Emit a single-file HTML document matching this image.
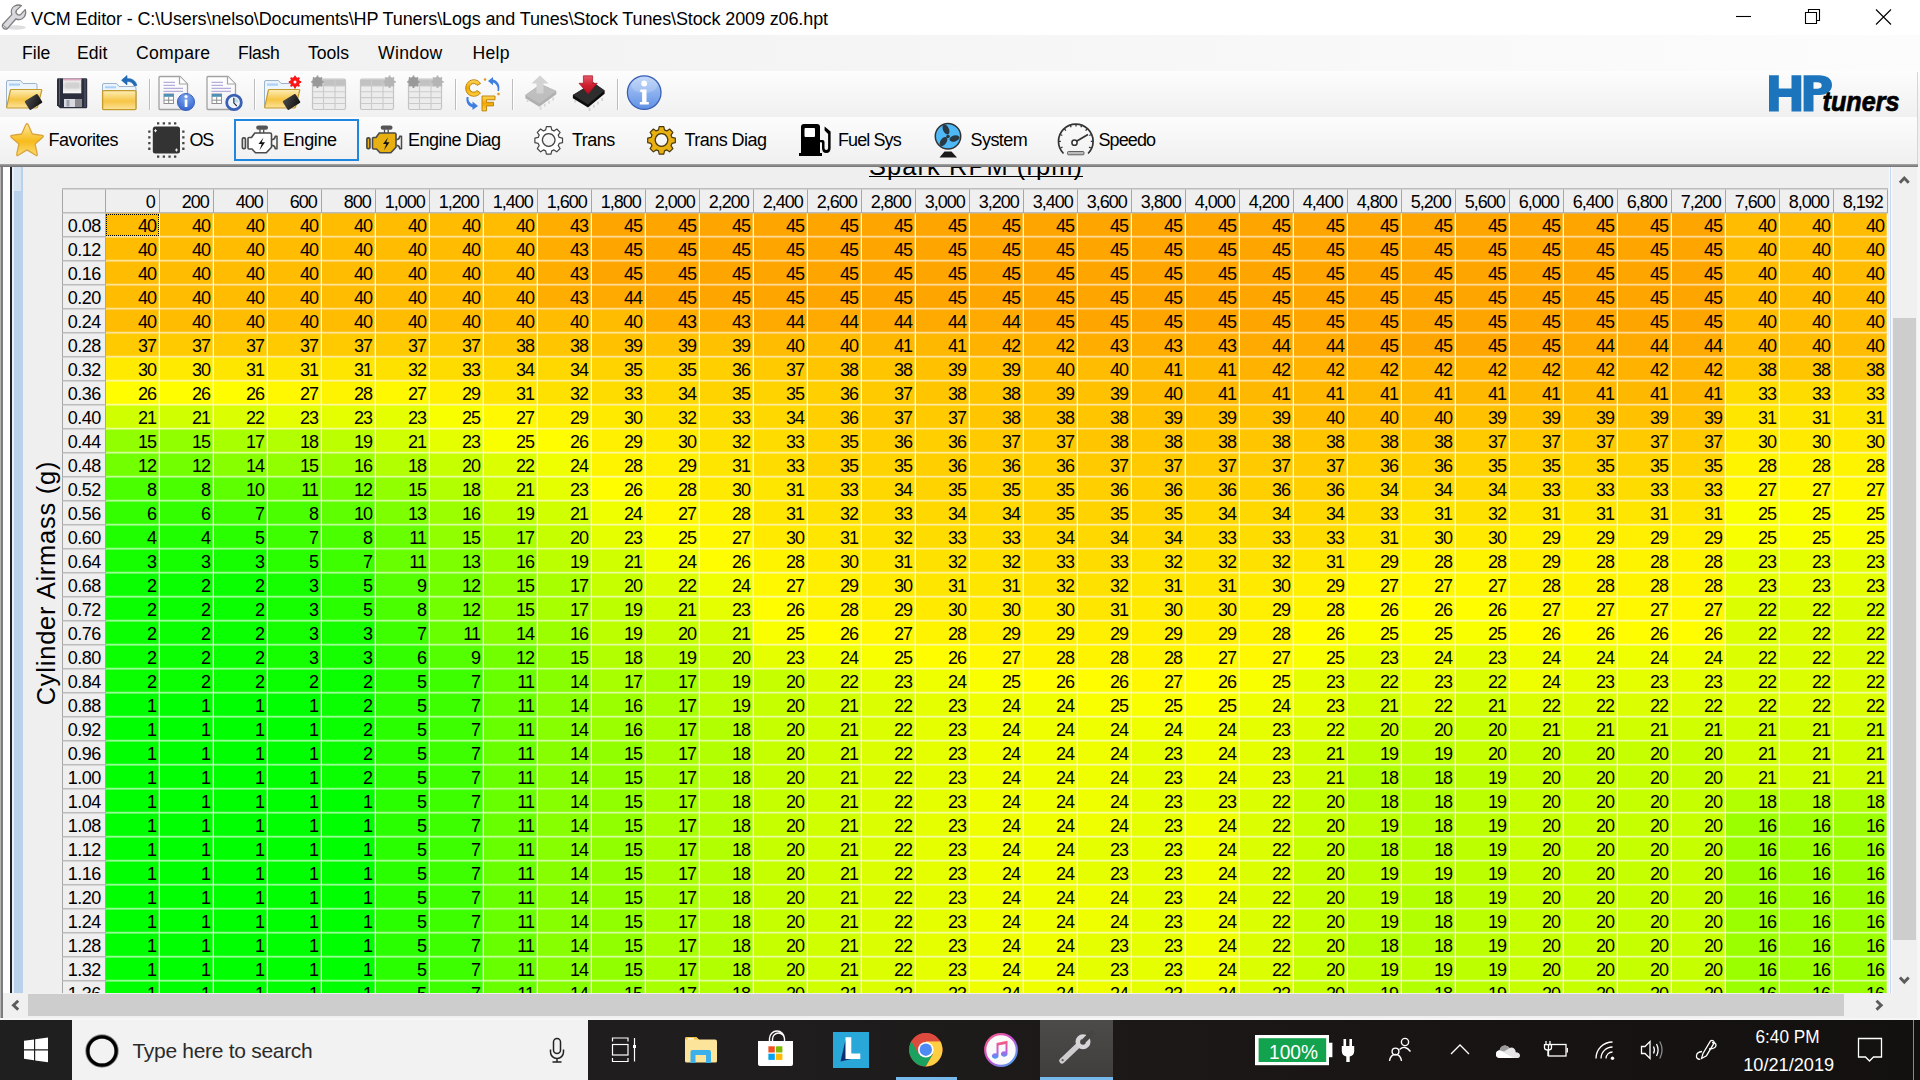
<!DOCTYPE html>
<html><head><meta charset="utf-8"><title>VCM Editor</title>
<style>
*{box-sizing:border-box}
html,body{margin:0;padding:0}
body{width:1920px;height:1080px;overflow:hidden;background:#f0f0f0;font-family:"Liberation Sans",sans-serif;position:relative;color:#000}
.abs{position:absolute}
#titlebar{position:absolute;left:0;top:0;width:1920px;height:35px;background:#fff}
#menubar{position:absolute;left:0;top:35px;width:1920px;height:36px;background:linear-gradient(to right,#efefef,#fcfcfc)}
#toolbar{position:absolute;left:0;top:71px;width:1920px;height:46px;background:linear-gradient(#fdfdfd,#f0f0f0)}
#tabs{position:absolute;left:0;top:117px;width:1918px;height:47px;background:linear-gradient(#fcfcfc,#f0f0f0)}
#tabline{position:absolute;left:0;top:164px;width:1918px;height:3px;background:linear-gradient(#a8a8a8,#8a8a8a 50%,#727272);z-index:5}
#content{position:absolute;left:0;top:166px;width:1920px;height:854px;background:#efefef;overflow:hidden}
#view{position:absolute;left:23px;top:0;width:1866px;height:827px;overflow:hidden;background:#efefef}
#grid{position:absolute;left:39px;top:22px;width:1826px;transform:translateY(.5px)}
.hr,.tr{display:flex;height:24px}
.hr{height:25px;border-top:1px solid #8a8a8a}
.hc{width:54px;height:24px;border-right:1px solid #a6a6a6;border-bottom:1px solid #888;font-size:18px;letter-spacing:-1px;line-height:25px;text-align:right;padding-right:4.300px;background:#efefef;flex:none}
.rh{width:44px;height:24px;border-left:1px solid #a6a6a6;border-right:1px solid #a6a6a6;border-bottom:1px solid #888;font-size:18px;letter-spacing:-.5px;line-height:25px;text-align:right;padding-right:4.300px;background:#efefef;flex:none}
.c{width:54px;height:24px;border-right:1px solid rgba(255,255,255,.92);border-bottom:1px solid #fff;box-shadow:inset -1px 0 0 rgba(255,255,255,.3),inset 0 -1px 0 rgba(255,255,255,.3);font-size:18px;letter-spacing:-1px;line-height:25px;text-align:right;padding-right:3px;flex:none;position:relative}
.focus{position:absolute;left:0;top:1px;width:53px;height:22px;border:1px dotted #000;transform:translateY(-.5px)}
.mi{position:absolute;top:7px;font-size:17.6px;line-height:22px;white-space:pre}
.tl{position:absolute;top:12px;font-size:18px;line-height:22px;white-space:pre}
#taskbar{position:absolute;left:0;top:1020px;width:1920px;height:60px;background:linear-gradient(to right,#1f1e1e 0,#1f1d1d 40%,#1b1817 60%,#161312 80%,#131110 100%)}
</style></head><body>
<div id="titlebar"><svg class="abs" style="left:0;top:3px" width="30" height="30" viewBox="0 0 30 30">
<ellipse cx="16" cy="24.5" rx="10" ry="2.2" fill="#000" opacity=".13"/>
<g fill="#d9d9de" stroke="#7d7d7d" stroke-width="1.3" stroke-linejoin="round">
<path d="M2.6 21.5 L11.8 11.6 C10.6 8.2 11.6 4.6 14.6 3 C16.6 2 19.4 1.8 21.4 2.6 L16.4 7.4 C15.6 9 16.2 10.8 17.6 11.6 C18.8 12.2 20 12 20.8 11.4 L25.2 6.6 C26 9 25.6 12 24 14.2 C22 16.6 18.6 17 16 15.8 L7.4 25.6 C6 26.4 4.4 26.2 3.2 25 C2.2 24 2 22.6 2.6 21.5 Z"/>
</g>
<path d="M3.4 22.4 L7 25.4" stroke="#8a8a8a" stroke-width="1" fill="none"/>
</svg>
<div class="abs" style="left:31px;top:8px;font-size:18px;line-height:22px;letter-spacing:-.12px;white-space:pre">VCM Editor - C:\Users\nelso\Documents\HP Tuners\Logs and Tunes\Stock Tunes\Stock 2009 z06.hpt</div>
<svg class="abs" style="left:1720px;top:0" width="200" height="35" viewBox="0 0 200 35" fill="none" stroke="#000" stroke-width="1.1">
<path d="M16 16.5H31"/>
<path d="M85.5 12.5h11v11h-11z"/><path d="M88.5 12.5v-3h11v11h-3"/>
<path d="M156 9.5L171 24.5M171 9.5L156 24.5"/>
</svg>
</div>
<div id="menubar"><div class="mi" style="left:22px">File</div><div class="mi" style="left:77px">Edit</div><div class="mi" style="left:136px;letter-spacing:.3px">Compare</div><div class="mi" style="left:238px;letter-spacing:-.3px">Flash</div><div class="mi" style="left:308px">Tools</div><div class="mi" style="left:378px;letter-spacing:.35px">Window</div><div class="mi" style="left:472.500px;letter-spacing:.3px">Help</div>
</div>
<div id="toolbar"><svg class="abs" style="left:0;top:0" width="1920" height="46" viewBox="0 71 1920 46">
<defs>
<linearGradient id="gy" x1="0" y1="0" x2="0" y2="1"><stop offset="0" stop-color="#fdeeb8"/><stop offset=".55" stop-color="#f6c544"/><stop offset="1" stop-color="#fbe29a"/></linearGradient>
<linearGradient id="gb" x1="0" y1="0" x2="0" y2="1"><stop offset="0" stop-color="#e8f2fc"/><stop offset="1" stop-color="#ffffff"/></linearGradient>
<linearGradient id="gdoc" x1="0" y1="0" x2="0" y2="1"><stop offset="0" stop-color="#ffffff"/><stop offset="1" stop-color="#f0f0f3"/></linearGradient>
<radialGradient id="ginfo" cx=".5" cy=".25" r=".8"><stop offset="0" stop-color="#7fa8f0"/><stop offset="1" stop-color="#2f5fcb"/></radialGradient>
<linearGradient id="ginfo2" x1="0" y1="0" x2="0" y2="1"><stop offset="0" stop-color="#b9d2fa"/><stop offset="1" stop-color="#5f8fe4"/></linearGradient>
<linearGradient id="ggold" x1="0" y1="0" x2="0" y2="1"><stop offset="0" stop-color="#ffd75a"/><stop offset=".5" stop-color="#f0a800"/><stop offset="1" stop-color="#ffd040"/></linearGradient>
<linearGradient id="gchip" x1="0" y1="0" x2="1" y2="1"><stop offset="0" stop-color="#4a4a4a"/><stop offset="1" stop-color="#111"/></linearGradient>
<linearGradient id="gred" x1="0" y1="0" x2="0" y2="1"><stop offset="0" stop-color="#e8596a"/><stop offset=".5" stop-color="#cf2130"/><stop offset="1" stop-color="#b30f1d"/></linearGradient>
<linearGradient id="gflop" x1="0" y1="0" x2="0" y2="1"><stop offset="0" stop-color="#f4f4f4"/><stop offset=".5" stop-color="#d8d8d8"/><stop offset="1" stop-color="#fafafa"/></linearGradient>
<g id="ofold">
<path d="M6.5 107.5V82q0-1.5 1.5-1.5h12.5l2.5 3H35.5q1.5 0 1.5 1.5V107.5z" fill="url(#gb)" stroke="#9db3c9" stroke-width="1"/>
<rect x="9" y="83.5" width="11" height="2.2" fill="#a8d0f8"/>
<path d="M11.5 89.5H41q1 0 .7 1L37.5 107q-.3 1-1.5 1H7.5q-1 0-.8-1L10.3 90.5q.2-1 1.2-1z" fill="url(#gy)" stroke="#c39a2c" stroke-width="1.2"/>
<g transform="rotate(-32 33 102)"><rect x="26" y="97" width="15" height="10.5" rx="1.2" fill="url(#gchip)"/></g>
</g>
<g id="doc">
<path d="M160 76.5h20l7.500 7.500V108.500q0 1-1 1H160q-1 0-1-1V77.500q0-1 1-1z" fill="url(#gdoc)" stroke="#a2a2a2" stroke-width="1.3"/>
<path d="M179.500 76.500v7.500h7.500" fill="#fff" stroke="#a2a2a2" stroke-width="1.2"/>
<path d="M163.500 82.300h11.500M163.500 85.300h11.500M163.500 88.300h19.500M163.500 91.300h19.500" stroke="#b5aedb" stroke-width="1.3"/>
<rect x="164" y="94" width="9.500" height="9.500" fill="#fff" stroke="#8f8f8f" stroke-width="1"/>
<rect x="164" y="94" width="9.500" height="2.800" fill="#4f8fb8"/>
<path d="M168.700 97v6.500M164 100.200h9.500" stroke="#8f8f8f" stroke-width="1"/>
</g>
<g id="gear"><circle r="3.600" fill="none" stroke-width="2.600"/><path d="M0-6.200V6.200M-6.200 0H6.200M-4.400-4.400L4.400 4.400M-4.400 4.400L4.400-4.400" stroke-width="1.800"/></g>
<g id="tbl">
<rect x="312.500" y="79" width="33" height="30.500" rx="1.500" fill="#ececec" stroke="#c4c4c4" stroke-width="1.200"/>
<rect x="313" y="79.500" width="32" height="6.500" fill="#c2c2c2"/>
<path d="M323.500 79.500v30M335 79.500v30M313 86h32M313 91.800h32M313 97.600h32M313 103.500h32" stroke="#cbcbcb" stroke-width="1.100" fill="none"/>
</g>
</defs>
<!-- icon 1 -->
<use href="#ofold"/>
<!-- floppy -->
<path d="M57 79.500q0-1.200 1.200-1.200H86q1.200 0 1.200 1.200V107q0 1.200-1.200 1.200H60l-3-3z" fill="#2b2e3d"/>
<path d="M59.500 79v26" stroke="#5a5f75" stroke-width="1"/><path d="M85 79v28" stroke="#5a5f75" stroke-width="1"/>
<rect x="63" y="78.600" width="18.300" height="14.700" fill="url(#gflop)"/>
<rect x="63" y="78.600" width="18.300" height="1.800" fill="#dba6bd"/>
<rect x="65.500" y="82.500" width="13.500" height="6" fill="#cfcfcf" opacity=".8"/>
<rect x="64" y="99" width="18" height="8" fill="#d9dbe2"/>
<rect x="75" y="99" width="7" height="8" fill="#8b8b8f"/>
<rect x="66.500" y="100" width="3" height="6.500" fill="#9ea2ae"/>
<!-- folder w/ arrow -->
<path d="M102.500 109V85q0-1.500 1.500-1.500h12.500l2.500 3H134.500q1.500 0 1.500 1.500V109z" fill="url(#gb)" stroke="#9db3c9" stroke-width="1"/>
<rect x="105" y="86.300" width="11" height="2" fill="#a8d0f8"/>
<rect x="102.600" y="90.600" width="33.400" height="19" rx="1" fill="url(#gy)" stroke="#c39a2c" stroke-width="1.300"/>
<path d="M136.800 85.500c-.8-5-5.500-7.500-9.800-6.700v-3.300l-5.500 4.700 5.500 4.700v-3.300c3-.5 6 1 7.300 4.300z" fill="#1f6cba" stroke="#1a5ea6" stroke-width=".6"/>
<!-- separators -->
<path d="M149.500 79v31M254.500 79v31M455.500 79v31M512.500 79v31M617.500 79v31" stroke="#bdbdbd" stroke-width="1"/>
<path d="M150.500 79v31M255.500 79v31M456.500 79v31M513.500 79v31M618.500 79v31" stroke="#fff" stroke-width="1"/>
<!-- doc + info -->
<use href="#doc"/>
<circle cx="186" cy="102" r="8.600" fill="url(#ginfo)" stroke="#2c55b8" stroke-width=".8"/>
<rect x="184.700" y="99.500" width="2.700" height="7.500" fill="#fff"/><circle cx="186" cy="96.600" r="1.600" fill="#fff"/>
<!-- doc + clock -->
<use href="#doc" x="48"/>
<circle cx="234" cy="102.400" r="7.300" fill="#eef4fb" stroke="#3a5fb5" stroke-width="2.800"/>
<path d="M234 102.400h4.500a4.500 4.500 0 0 0-4.500-4.500z" fill="#b9d9ee"/>
<path d="M233.800 97.800v5l3 3.200" stroke="#333" stroke-width="1.200" fill="none"/>
<!-- folder+chip+red star -->
<use href="#ofold" x="258"/>
<g transform="translate(295 82)" stroke="#ff1515" fill="none"><use href="#gear"/></g>
<circle cx="295" cy="82" r="1.500" fill="#fff"/>
<!-- tables -->
<use href="#tbl"/><g transform="translate(317.500 81.800)" stroke="#999" fill="none"><use href="#gear"/></g>
<use href="#tbl" x="48"/><g transform="translate(389.600 81.800)" stroke="#b4b4b4" fill="none"><use href="#gear"/></g>
<use href="#tbl" x="96"/><g transform="translate(413.500 81.800)" stroke="#999" fill="none"><use href="#gear"/></g><g transform="translate(437.500 81.800)" stroke="#b4b4b4" fill="none"><use href="#gear"/></g>
<!-- CF -->
<path d="M480.500 83.500c-2-3.500-7-5-11-2.500-4.500 3-5 9.500-1.500 13 3.500 3.300 9.500 3 12.500-1l-3.500-2.500c-1.500 2-4.500 2.300-6.300.5-1.800-1.800-1.700-5 .3-6.600 2-1.500 4.800-1 6 1z" fill="url(#ggold)" stroke="#b97c06" stroke-width=".9"/>
<path d="M482 96h13v3.800h-8.500v2.500h7v3.600h-7v5h-4.500z" fill="url(#ggold)" stroke="#b97c06" stroke-width=".9"/>
<path d="M497.500 90c.8-4-1-7.300-4.500-8.500v2.800l-5-4.300 5-4v2.500c5 1 7.500 6 6 11.500z" fill="#3f7fe0" transform="translate(0 1)"/>
<path d="M468.500 99c-.5 3.500 1 6 4 7.300v-2.800l5.500 4.500-5.500 4v-2.600c-4.500-1-7-5.400-5.800-10.400z" fill="#3f7fe0" transform="translate(0 -2)"/>
<circle cx="485" cy="79.500" r="1.300" fill="#e09a20"/><circle cx="498.500" cy="94" r="1.300" fill="#e09a20"/>
<!-- gray chip -->
<g opacity=".9">
<path d="M525.400 95l15.400-11 15.500 7v3.200l-17 12.600-13.900-8.600z" fill="#a9a9a9"/>
<path d="M525.400 95l13.900 8.600 17-12.600-15.500-7z" fill="#b9b9b9"/>
<path d="M540.600 106.800v3M544.800 103.800v3M549 100.700v3M553.200 97.600v3M527.500 99.500v2.500" stroke="#d4d4d4" stroke-width="1.700"/>
<path d="M536.500 93.500v-10h-5l8.500-8 8.500 8h-5v10z" fill="#cfcfcf"/>
</g>
<!-- black chip + red arrow -->
<path d="M572.900 95l20.400-12.500 11.300 7.900v3.400l-16.600 13.800-15.100-9.300z" fill="#0c0c0c"/>
<path d="M572.900 95l15.100 9.600 16.600-14.200-11.300-7.900z" fill="#2e2e2e"/>
<path d="M589.600 108v3M593.800 104.700v3M598 101.400v3M602.200 98v3M575.200 100v2.500" stroke="#d2d2d2" stroke-width="1.700"/>
<path d="M583.400 75.800h9.200v7.500h4.600l-9.100 10.600-9.100-10.600h4.400z" fill="url(#gred)" stroke="#a8101c" stroke-width=".7"/>
<!-- info -->
<circle cx="644.200" cy="92.600" r="16.800" fill="url(#ginfo2)" stroke="#3a5fb5" stroke-width="1.300"/>
<ellipse cx="644.200" cy="85" rx="13" ry="8" fill="#fff" opacity=".18"/>
<circle cx="644.200" cy="83.500" r="2.900" fill="#fff"/>
<path d="M640.300 89.500h6.200v12.500h2.300v2.600h-9v-2.600h2.300v-10h-1.800z" fill="#fff"/>
<!-- logo -->
<g fill="#1c75bc"><path d="M1769 75.300h9.800v13.200h12.700V75.300h9.800v36.300h-9.800V97h-12.700v14.600h-9.800z"/><path d="M1803.600 75.300h15.400c8 0 13 3.600 13 9.600 0 6-5 10-12.500 10h-6v16.700h-9.900zm9.900 7v6.500h3.700c2.600 0 4.500-1 4.500-3.300s-1.900-3.200-4.500-3.200z"/></g>
<text x="1822.500" y="111" font-family="Liberation Sans" font-weight="bold" font-style="italic" font-size="27.500" textLength="77" lengthAdjust="spacingAndGlyphs" fill="#000" stroke="#000" stroke-width=".7">tuners</text>
</svg>
</div>
<div id="tabs"><div class="abs" style="left:234px;top:2px;width:124.500px;height:42.300px;border:2px solid #1f87e0"></div>
<svg class="abs" style="left:0;top:0" width="1918" height="47" viewBox="0 117 1918 47">
<defs>
<linearGradient id="gstar" x1="0" y1="0" x2="0" y2="1"><stop offset="0" stop-color="#fdeb9c"/><stop offset=".55" stop-color="#f7bb1c"/><stop offset="1" stop-color="#fbdc74"/></linearGradient>
<g id="eng">
<rect x="256.200" y="125.500" width="11.800" height="4.300" rx="2" fill="#555" stroke="none"/>
<path d="M260 129.500v3.500M263.700 129.500v3.500" stroke-width="1.300" fill="none"/>
<path d="M254.800 133H270q1.500 0 1.500 1.500V147.300L266.300 152.800H255.500L252 149H249q-1 0-1-1V138.500q0-1 1-1H251.500z" stroke-width="1.600"/>
<rect x="242.400" y="137.900" width="3" height="10.700" rx="1.200" stroke-width="1.700"/>
<path d="M272 139.700q3.200-.5 3.200-3.500h1.800v12.500h-1.800q0-3-3.200-3.500" stroke-width="1.500" fill="none"/>
<path d="M263.500 137.500l-5 6.500h3.200l-2.200 6.200 5.500-8h-3.300z" fill="#111" stroke="none"/>
</g>
<g id="cog"><path d="M-2.300-13.400h4.600l.7 3.300 2.300 1 2.800-1.900 3.300 3.300-1.900 2.800 1 2.300 3.300.7v4.600l-3.300.7-1 2.300 1.900 2.800-3.300 3.300-2.800-1.900-2.300 1-.7 3.300h-4.600l-.7-3.300-2.300-1-2.800 1.900-3.300-3.300 1.900-2.800-1-2.300-3.300-.7v-4.600l3.300-.7 1-2.300-1.900-2.800 3.300-3.300 2.800 1.900 2.300-1zM0-6.300a6.300 6.300 0 1 0 .01 0z" fill-rule="evenodd" stroke-width="1.200" stroke-linejoin="round"/></g>
</defs>
<!-- star -->
<path d="M26 124.300q1-1.500 2 0l4.300 9.700 10 1.300q1.800.5.500 1.900l-7.700 6.800 2.200 10.300q.2 1.800-1.500 1l-8.800-5.400-8.800 5.400q-1.700.8-1.500-1l2.200-10.300-7.700-6.800q-1.300-1.400.5-1.900l10-1.300z" fill="url(#gstar)" stroke="#d9a43e" stroke-width="1.300" stroke-linejoin="round"/>
<!-- chip -->
<rect x="152.800" y="126.600" width="27.200" height="27" rx="2.500" fill="#333"/>
<g fill="#444"><path d="M157 122.300h2.300v2.300H157zM162.700 122.300h2.300v2.300h-2.300zM168.400 122.300h2.300v2.300h-2.300zM174 122.300h2.300v2.300H174zM157 155.400h2.300v2.300H157zM162.700 155.400h2.300v2.300h-2.300zM168.400 155.400h2.300v2.300h-2.300zM174 155.400h2.300v2.300H174zM148.200 130.500h2.300v2.300h-2.300zM148.200 136.200h2.300v2.300h-2.300zM148.200 141.900h2.300v2.300h-2.300zM148.200 147.600h2.300v2.300h-2.300zM182.200 130.500h2.300v2.300h-2.300zM182.200 136.200h2.300v2.300h-2.300zM182.200 141.900h2.300v2.300h-2.300zM182.200 147.600h2.300v2.300h-2.300z"/></g>
<path d="M155.500 129.200v3M154 130.700h3M176.500 148.500v3M175 150h3" stroke="#eee" stroke-width="1"/>
<!-- engines -->
<g fill="#fff" stroke="#4a4a4a" stroke-linejoin="round"><use href="#eng"/></g>
<g fill="#e8b010" stroke="#4a4a4a" stroke-linejoin="round"><use href="#eng" x="124.500"/></g>
<!-- gears -->
<g transform="translate(548.700 140)" fill="#fff" stroke="#444"><use href="#cog"/></g>
<g transform="translate(661.500 140)" fill="#e8b010" stroke="#4a3a10"><use href="#cog"/></g>
<!-- fuel -->
<path d="M801 153V127q0-3 3-3h13q3 0 3 3v26h2v3h-23v-3z" fill="#000"/>
<rect x="804.500" y="128" width="10.500" height="9" rx="1" fill="#fff"/>
<path d="M820 140h2.500q2 0 2 2v6q0 2 1.800 2t1.800-2v-14l-3.500-3.500v-4l6 5v16.500q0 5-4.300 5t-4.300-5v-5q0-.8-.8-.8H820z" fill="#000"/>
<!-- fan -->
<path d="M939.500 157.600l5-6h7l5.500 6z" fill="#1a1a1a"/>
<circle cx="948" cy="136.300" r="12.700" fill="#4fb9f8" stroke="#333" stroke-width="1.500"/>
<g fill="#2a3a44"><ellipse cx="946" cy="129.500" rx="3" ry="5.200" transform="rotate(-25 946 129.500)"/><ellipse cx="954.500" cy="138.500" rx="3" ry="5.200" transform="rotate(75 954.500 138.500)"/><ellipse cx="943.500" cy="141.500" rx="3" ry="5.200" transform="rotate(35 943.500 141.500)"/><circle cx="948" cy="136.500" r="1.800"/></g>
<!-- speedo -->
<path d="M1063.500 153.500a17.300 17.300 0 1 1 24.600 0" fill="none" stroke="#333" stroke-width="1.700"/>
<path d="M1060.500 148l2 -.8M1058.600 141.400h2.200M1060.300 134.500l2 1M1064.500 129l1.400 1.600M1070.300 125.300l.8 2M1076 124.200v2.200M1081.700 125.300l-.8 2M1087 129l-1.400 1.600M1091.300 134.500l-2 1M1093 141.400h-2.200M1091 148l-2-.8" stroke="#333" stroke-width="1.300"/>
<circle cx="1074.500" cy="142.700" r="2.600" fill="#fff" stroke="#333" stroke-width="1.500"/>
<path d="M1076.500 141.200l11.500-6.700" stroke="#333" stroke-width="1.800"/>
<rect x="1067.500" y="151.500" width="16.500" height="3.300" rx="1" fill="#bbb" stroke="#555" stroke-width=".9"/>
</svg>
<div class="tl" style="left:48.500px;letter-spacing:-.5px">Favorites</div>
<div class="tl" style="left:189.500px;letter-spacing:-1.300px">OS</div>
<div class="tl" style="left:283px;letter-spacing:-.4px">Engine</div>
<div class="tl" style="left:408px;letter-spacing:-.5px">Engine Diag</div>
<div class="tl" style="left:572px;letter-spacing:-.5px">Trans</div>
<div class="tl" style="left:684.500px;letter-spacing:-.55px">Trans Diag</div>
<div class="tl" style="left:838px;letter-spacing:-.9px">Fuel Sys</div>
<div class="tl" style="left:970.500px;letter-spacing:-.55px">System</div>
<div class="tl" style="left:1098.500px;letter-spacing:-.9px">Speedo</div>
</div>
<div id="tabline"></div>
<div class="abs" style="left:1917px;top:72px;width:1px;height:92px;background:#d6d6d6"></div>
<div id="content">
<div class="abs" style="left:0;top:0;width:1px;height:854px;background:#b4b4b4"></div>
<div class="abs" style="left:1px;top:0;width:2px;height:854px;background:#7c7c7c"></div>
<div class="abs" style="left:3px;top:0;width:7px;height:827px;background:#fff"></div>
<div class="abs" style="left:10px;top:0;width:2px;height:827px;background:#222"></div>
<div class="abs" style="left:12px;top:0;width:2px;height:827px;background:#e8f0fa"></div>
<div class="abs" style="left:14px;top:0;width:8.500px;height:827px;background:#b9d1ea"></div>
<div class="abs" style="left:14px;top:0;width:7px;height:25px;background:#d7e4f2"></div>
<div class="abs" style="left:1889px;top:0;width:4px;height:827px;background:#fafafa"></div>
<div class="abs" style="left:1890px;top:0;width:1px;height:827px;background:#c3d8ef"></div>
<div class="abs" style="left:1892px;top:0;width:26px;height:827px;background:#f0f0f0"></div>
<div class="abs" style="left:1893px;top:152px;width:23px;height:622px;background:#cdcdcd"></div>
<svg class="abs" style="left:1892px;top:0" width="26" height="827" viewBox="0 0 26 827" fill="none" stroke="#5c5c5c" stroke-width="2.900"><path d="M7.900 16.800l4.400-4.700 4.400 4.700"/><path d="M7.900 811.400l4.400 4.700 4.400-4.700"/></svg>
<div class="abs" style="left:3px;top:827px;width:1915px;height:25px;background:#f0f0f0"></div>
<div class="abs" style="left:28px;top:828px;width:1816px;height:22px;background:#cdcdcd"></div>
<svg class="abs" style="left:3px;top:827px" width="1915" height="25" viewBox="0 0 1915 25" fill="none" stroke="#5c5c5c" stroke-width="2.900"><path d="M15.200 7.800l-4.700 4.400 4.700 4.400"/><path d="M1873.500 7.800l4.700 4.400-4.700 4.400"/></svg>
<div class="abs" style="left:0;top:852px;width:1920px;height:2px;background:#f6f6f6"></div>
<div class="abs" style="left:1917px;top:0;width:3px;height:854px;background:#f6f6f6"></div>
<div id="view">
<div class="abs" style="left:846px;top:-15.500px;font-size:25.400px;line-height:30px;letter-spacing:1.100px;white-space:pre;text-decoration:underline;text-decoration-thickness:1.300px;text-underline-offset:1.200px;text-decoration-skip-ink:none">Spark RPM (rpm)</div>
<div class="abs" style="left:22.500px;top:416.500px;width:0;height:0"><div style="position:absolute;left:-150px;top:-15px;width:300px;height:30px;text-align:center;font-size:25.400px;line-height:30px;letter-spacing:.8px;white-space:pre;transform:rotate(-90deg)">Cylinder Airmass (g)</div></div>
<div id="grid">
<div class="hr">
<div class="hc rh"></div>
<div class="hc">0</div>
<div class="hc">200</div>
<div class="hc">400</div>
<div class="hc">600</div>
<div class="hc">800</div>
<div class="hc">1,000</div>
<div class="hc">1,200</div>
<div class="hc">1,400</div>
<div class="hc">1,600</div>
<div class="hc">1,800</div>
<div class="hc">2,000</div>
<div class="hc">2,200</div>
<div class="hc">2,400</div>
<div class="hc">2,600</div>
<div class="hc">2,800</div>
<div class="hc">3,000</div>
<div class="hc">3,200</div>
<div class="hc">3,400</div>
<div class="hc">3,600</div>
<div class="hc">3,800</div>
<div class="hc">4,000</div>
<div class="hc">4,200</div>
<div class="hc">4,400</div>
<div class="hc">4,800</div>
<div class="hc">5,200</div>
<div class="hc">5,600</div>
<div class="hc">6,000</div>
<div class="hc">6,400</div>
<div class="hc">6,800</div>
<div class="hc">7,200</div>
<div class="hc">7,600</div>
<div class="hc">8,000</div>
<div class="hc">8,192</div>
</div>
<div class="tr">
<div class="rh">0.08</div>
<div class="c" style="background:#ffbc00"><i class="focus"></i>40</div>
<div class="c" style="background:#ffbc00">40</div>
<div class="c" style="background:#ffbc00">40</div>
<div class="c" style="background:#ffbc00">40</div>
<div class="c" style="background:#ffbc00">40</div>
<div class="c" style="background:#ffbc00">40</div>
<div class="c" style="background:#ffbc00">40</div>
<div class="c" style="background:#ffbc00">40</div>
<div class="c" style="background:#ffae00">43</div>
<div class="c" style="background:#ffa500">45</div>
<div class="c" style="background:#ffa500">45</div>
<div class="c" style="background:#ffa500">45</div>
<div class="c" style="background:#ffa500">45</div>
<div class="c" style="background:#ffa500">45</div>
<div class="c" style="background:#ffa500">45</div>
<div class="c" style="background:#ffa500">45</div>
<div class="c" style="background:#ffa500">45</div>
<div class="c" style="background:#ffa500">45</div>
<div class="c" style="background:#ffa500">45</div>
<div class="c" style="background:#ffa500">45</div>
<div class="c" style="background:#ffa500">45</div>
<div class="c" style="background:#ffa500">45</div>
<div class="c" style="background:#ffa500">45</div>
<div class="c" style="background:#ffa500">45</div>
<div class="c" style="background:#ffa500">45</div>
<div class="c" style="background:#ffa500">45</div>
<div class="c" style="background:#ffa500">45</div>
<div class="c" style="background:#ffa500">45</div>
<div class="c" style="background:#ffa500">45</div>
<div class="c" style="background:#ffa500">45</div>
<div class="c" style="background:#ffbc00">40</div>
<div class="c" style="background:#ffbc00">40</div>
<div class="c" style="background:#ffbc00">40</div>
</div>
<div class="tr">
<div class="rh">0.12</div>
<div class="c" style="background:#ffbc00">40</div>
<div class="c" style="background:#ffbc00">40</div>
<div class="c" style="background:#ffbc00">40</div>
<div class="c" style="background:#ffbc00">40</div>
<div class="c" style="background:#ffbc00">40</div>
<div class="c" style="background:#ffbc00">40</div>
<div class="c" style="background:#ffbc00">40</div>
<div class="c" style="background:#ffbc00">40</div>
<div class="c" style="background:#ffae00">43</div>
<div class="c" style="background:#ffa500">45</div>
<div class="c" style="background:#ffa500">45</div>
<div class="c" style="background:#ffa500">45</div>
<div class="c" style="background:#ffa500">45</div>
<div class="c" style="background:#ffa500">45</div>
<div class="c" style="background:#ffa500">45</div>
<div class="c" style="background:#ffa500">45</div>
<div class="c" style="background:#ffa500">45</div>
<div class="c" style="background:#ffa500">45</div>
<div class="c" style="background:#ffa500">45</div>
<div class="c" style="background:#ffa500">45</div>
<div class="c" style="background:#ffa500">45</div>
<div class="c" style="background:#ffa500">45</div>
<div class="c" style="background:#ffa500">45</div>
<div class="c" style="background:#ffa500">45</div>
<div class="c" style="background:#ffa500">45</div>
<div class="c" style="background:#ffa500">45</div>
<div class="c" style="background:#ffa500">45</div>
<div class="c" style="background:#ffa500">45</div>
<div class="c" style="background:#ffa500">45</div>
<div class="c" style="background:#ffa500">45</div>
<div class="c" style="background:#ffbc00">40</div>
<div class="c" style="background:#ffbc00">40</div>
<div class="c" style="background:#ffbc00">40</div>
</div>
<div class="tr">
<div class="rh">0.16</div>
<div class="c" style="background:#ffbc00">40</div>
<div class="c" style="background:#ffbc00">40</div>
<div class="c" style="background:#ffbc00">40</div>
<div class="c" style="background:#ffbc00">40</div>
<div class="c" style="background:#ffbc00">40</div>
<div class="c" style="background:#ffbc00">40</div>
<div class="c" style="background:#ffbc00">40</div>
<div class="c" style="background:#ffbc00">40</div>
<div class="c" style="background:#ffae00">43</div>
<div class="c" style="background:#ffa500">45</div>
<div class="c" style="background:#ffa500">45</div>
<div class="c" style="background:#ffa500">45</div>
<div class="c" style="background:#ffa500">45</div>
<div class="c" style="background:#ffa500">45</div>
<div class="c" style="background:#ffa500">45</div>
<div class="c" style="background:#ffa500">45</div>
<div class="c" style="background:#ffa500">45</div>
<div class="c" style="background:#ffa500">45</div>
<div class="c" style="background:#ffa500">45</div>
<div class="c" style="background:#ffa500">45</div>
<div class="c" style="background:#ffa500">45</div>
<div class="c" style="background:#ffa500">45</div>
<div class="c" style="background:#ffa500">45</div>
<div class="c" style="background:#ffa500">45</div>
<div class="c" style="background:#ffa500">45</div>
<div class="c" style="background:#ffa500">45</div>
<div class="c" style="background:#ffa500">45</div>
<div class="c" style="background:#ffa500">45</div>
<div class="c" style="background:#ffa500">45</div>
<div class="c" style="background:#ffa500">45</div>
<div class="c" style="background:#ffbc00">40</div>
<div class="c" style="background:#ffbc00">40</div>
<div class="c" style="background:#ffbc00">40</div>
</div>
<div class="tr">
<div class="rh">0.20</div>
<div class="c" style="background:#ffbc00">40</div>
<div class="c" style="background:#ffbc00">40</div>
<div class="c" style="background:#ffbc00">40</div>
<div class="c" style="background:#ffbc00">40</div>
<div class="c" style="background:#ffbc00">40</div>
<div class="c" style="background:#ffbc00">40</div>
<div class="c" style="background:#ffbc00">40</div>
<div class="c" style="background:#ffbc00">40</div>
<div class="c" style="background:#ffae00">43</div>
<div class="c" style="background:#ffaa00">44</div>
<div class="c" style="background:#ffa500">45</div>
<div class="c" style="background:#ffa500">45</div>
<div class="c" style="background:#ffa500">45</div>
<div class="c" style="background:#ffa500">45</div>
<div class="c" style="background:#ffa500">45</div>
<div class="c" style="background:#ffa500">45</div>
<div class="c" style="background:#ffa500">45</div>
<div class="c" style="background:#ffa500">45</div>
<div class="c" style="background:#ffa500">45</div>
<div class="c" style="background:#ffa500">45</div>
<div class="c" style="background:#ffa500">45</div>
<div class="c" style="background:#ffa500">45</div>
<div class="c" style="background:#ffa500">45</div>
<div class="c" style="background:#ffa500">45</div>
<div class="c" style="background:#ffa500">45</div>
<div class="c" style="background:#ffa500">45</div>
<div class="c" style="background:#ffa500">45</div>
<div class="c" style="background:#ffa500">45</div>
<div class="c" style="background:#ffa500">45</div>
<div class="c" style="background:#ffa500">45</div>
<div class="c" style="background:#ffbc00">40</div>
<div class="c" style="background:#ffbc00">40</div>
<div class="c" style="background:#ffbc00">40</div>
</div>
<div class="tr">
<div class="rh">0.24</div>
<div class="c" style="background:#ffbc00">40</div>
<div class="c" style="background:#ffbc00">40</div>
<div class="c" style="background:#ffbc00">40</div>
<div class="c" style="background:#ffbc00">40</div>
<div class="c" style="background:#ffbc00">40</div>
<div class="c" style="background:#ffbc00">40</div>
<div class="c" style="background:#ffbc00">40</div>
<div class="c" style="background:#ffbc00">40</div>
<div class="c" style="background:#ffbc00">40</div>
<div class="c" style="background:#ffbc00">40</div>
<div class="c" style="background:#ffae00">43</div>
<div class="c" style="background:#ffae00">43</div>
<div class="c" style="background:#ffaa00">44</div>
<div class="c" style="background:#ffaa00">44</div>
<div class="c" style="background:#ffaa00">44</div>
<div class="c" style="background:#ffaa00">44</div>
<div class="c" style="background:#ffaa00">44</div>
<div class="c" style="background:#ffa500">45</div>
<div class="c" style="background:#ffa500">45</div>
<div class="c" style="background:#ffa500">45</div>
<div class="c" style="background:#ffa500">45</div>
<div class="c" style="background:#ffa500">45</div>
<div class="c" style="background:#ffa500">45</div>
<div class="c" style="background:#ffa500">45</div>
<div class="c" style="background:#ffa500">45</div>
<div class="c" style="background:#ffa500">45</div>
<div class="c" style="background:#ffa500">45</div>
<div class="c" style="background:#ffa500">45</div>
<div class="c" style="background:#ffa500">45</div>
<div class="c" style="background:#ffa500">45</div>
<div class="c" style="background:#ffbc00">40</div>
<div class="c" style="background:#ffbc00">40</div>
<div class="c" style="background:#ffbc00">40</div>
</div>
<div class="tr">
<div class="rh">0.28</div>
<div class="c" style="background:#ffca00">37</div>
<div class="c" style="background:#ffca00">37</div>
<div class="c" style="background:#ffca00">37</div>
<div class="c" style="background:#ffca00">37</div>
<div class="c" style="background:#ffca00">37</div>
<div class="c" style="background:#ffca00">37</div>
<div class="c" style="background:#ffca00">37</div>
<div class="c" style="background:#ffc600">38</div>
<div class="c" style="background:#ffc600">38</div>
<div class="c" style="background:#ffc100">39</div>
<div class="c" style="background:#ffc100">39</div>
<div class="c" style="background:#ffc100">39</div>
<div class="c" style="background:#ffbc00">40</div>
<div class="c" style="background:#ffbc00">40</div>
<div class="c" style="background:#ffb800">41</div>
<div class="c" style="background:#ffb800">41</div>
<div class="c" style="background:#ffb300">42</div>
<div class="c" style="background:#ffb300">42</div>
<div class="c" style="background:#ffae00">43</div>
<div class="c" style="background:#ffae00">43</div>
<div class="c" style="background:#ffae00">43</div>
<div class="c" style="background:#ffaa00">44</div>
<div class="c" style="background:#ffaa00">44</div>
<div class="c" style="background:#ffa500">45</div>
<div class="c" style="background:#ffa500">45</div>
<div class="c" style="background:#ffa500">45</div>
<div class="c" style="background:#ffa500">45</div>
<div class="c" style="background:#ffaa00">44</div>
<div class="c" style="background:#ffaa00">44</div>
<div class="c" style="background:#ffaa00">44</div>
<div class="c" style="background:#ffbc00">40</div>
<div class="c" style="background:#ffbc00">40</div>
<div class="c" style="background:#ffbc00">40</div>
</div>
<div class="tr">
<div class="rh">0.32</div>
<div class="c" style="background:#ffea00">30</div>
<div class="c" style="background:#ffea00">30</div>
<div class="c" style="background:#ffe600">31</div>
<div class="c" style="background:#ffe600">31</div>
<div class="c" style="background:#ffe600">31</div>
<div class="c" style="background:#ffe100">32</div>
<div class="c" style="background:#ffdc00">33</div>
<div class="c" style="background:#ffd800">34</div>
<div class="c" style="background:#ffd800">34</div>
<div class="c" style="background:#ffd300">35</div>
<div class="c" style="background:#ffd300">35</div>
<div class="c" style="background:#ffcf00">36</div>
<div class="c" style="background:#ffca00">37</div>
<div class="c" style="background:#ffc600">38</div>
<div class="c" style="background:#ffc600">38</div>
<div class="c" style="background:#ffc100">39</div>
<div class="c" style="background:#ffc100">39</div>
<div class="c" style="background:#ffbc00">40</div>
<div class="c" style="background:#ffbc00">40</div>
<div class="c" style="background:#ffb800">41</div>
<div class="c" style="background:#ffb800">41</div>
<div class="c" style="background:#ffb300">42</div>
<div class="c" style="background:#ffb300">42</div>
<div class="c" style="background:#ffb300">42</div>
<div class="c" style="background:#ffb300">42</div>
<div class="c" style="background:#ffb300">42</div>
<div class="c" style="background:#ffb300">42</div>
<div class="c" style="background:#ffb300">42</div>
<div class="c" style="background:#ffb300">42</div>
<div class="c" style="background:#ffb300">42</div>
<div class="c" style="background:#ffc600">38</div>
<div class="c" style="background:#ffc600">38</div>
<div class="c" style="background:#ffc600">38</div>
</div>
<div class="tr">
<div class="rh">0.36</div>
<div class="c" style="background:#fffd00">26</div>
<div class="c" style="background:#fffd00">26</div>
<div class="c" style="background:#fffd00">26</div>
<div class="c" style="background:#fff800">27</div>
<div class="c" style="background:#fff400">28</div>
<div class="c" style="background:#fff800">27</div>
<div class="c" style="background:#ffef00">29</div>
<div class="c" style="background:#ffe600">31</div>
<div class="c" style="background:#ffe100">32</div>
<div class="c" style="background:#ffdc00">33</div>
<div class="c" style="background:#ffd800">34</div>
<div class="c" style="background:#ffd300">35</div>
<div class="c" style="background:#ffd300">35</div>
<div class="c" style="background:#ffcf00">36</div>
<div class="c" style="background:#ffca00">37</div>
<div class="c" style="background:#ffc600">38</div>
<div class="c" style="background:#ffc600">38</div>
<div class="c" style="background:#ffc100">39</div>
<div class="c" style="background:#ffc100">39</div>
<div class="c" style="background:#ffbc00">40</div>
<div class="c" style="background:#ffb800">41</div>
<div class="c" style="background:#ffb800">41</div>
<div class="c" style="background:#ffb800">41</div>
<div class="c" style="background:#ffb800">41</div>
<div class="c" style="background:#ffb800">41</div>
<div class="c" style="background:#ffb800">41</div>
<div class="c" style="background:#ffb800">41</div>
<div class="c" style="background:#ffb800">41</div>
<div class="c" style="background:#ffb800">41</div>
<div class="c" style="background:#ffb800">41</div>
<div class="c" style="background:#ffdc00">33</div>
<div class="c" style="background:#ffdc00">33</div>
<div class="c" style="background:#ffdc00">33</div>
</div>
<div class="tr">
<div class="rh">0.40</div>
<div class="c" style="background:#d0ff00">21</div>
<div class="c" style="background:#d0ff00">21</div>
<div class="c" style="background:#dbff00">22</div>
<div class="c" style="background:#e5ff00">23</div>
<div class="c" style="background:#e5ff00">23</div>
<div class="c" style="background:#e5ff00">23</div>
<div class="c" style="background:#faff00">25</div>
<div class="c" style="background:#fff800">27</div>
<div class="c" style="background:#ffef00">29</div>
<div class="c" style="background:#ffea00">30</div>
<div class="c" style="background:#ffe100">32</div>
<div class="c" style="background:#ffdc00">33</div>
<div class="c" style="background:#ffd800">34</div>
<div class="c" style="background:#ffcf00">36</div>
<div class="c" style="background:#ffca00">37</div>
<div class="c" style="background:#ffca00">37</div>
<div class="c" style="background:#ffc600">38</div>
<div class="c" style="background:#ffc600">38</div>
<div class="c" style="background:#ffc600">38</div>
<div class="c" style="background:#ffc100">39</div>
<div class="c" style="background:#ffc100">39</div>
<div class="c" style="background:#ffc100">39</div>
<div class="c" style="background:#ffbc00">40</div>
<div class="c" style="background:#ffbc00">40</div>
<div class="c" style="background:#ffbc00">40</div>
<div class="c" style="background:#ffc100">39</div>
<div class="c" style="background:#ffc100">39</div>
<div class="c" style="background:#ffc100">39</div>
<div class="c" style="background:#ffc100">39</div>
<div class="c" style="background:#ffc100">39</div>
<div class="c" style="background:#ffe600">31</div>
<div class="c" style="background:#ffe600">31</div>
<div class="c" style="background:#ffe600">31</div>
</div>
<div class="tr">
<div class="rh">0.44</div>
<div class="c" style="background:#92ff00">15</div>
<div class="c" style="background:#92ff00">15</div>
<div class="c" style="background:#a7ff00">17</div>
<div class="c" style="background:#b1ff00">18</div>
<div class="c" style="background:#bbff00">19</div>
<div class="c" style="background:#d0ff00">21</div>
<div class="c" style="background:#e5ff00">23</div>
<div class="c" style="background:#faff00">25</div>
<div class="c" style="background:#fffd00">26</div>
<div class="c" style="background:#ffef00">29</div>
<div class="c" style="background:#ffea00">30</div>
<div class="c" style="background:#ffe100">32</div>
<div class="c" style="background:#ffdc00">33</div>
<div class="c" style="background:#ffd300">35</div>
<div class="c" style="background:#ffcf00">36</div>
<div class="c" style="background:#ffcf00">36</div>
<div class="c" style="background:#ffca00">37</div>
<div class="c" style="background:#ffca00">37</div>
<div class="c" style="background:#ffc600">38</div>
<div class="c" style="background:#ffc600">38</div>
<div class="c" style="background:#ffc600">38</div>
<div class="c" style="background:#ffc600">38</div>
<div class="c" style="background:#ffc600">38</div>
<div class="c" style="background:#ffc600">38</div>
<div class="c" style="background:#ffc600">38</div>
<div class="c" style="background:#ffca00">37</div>
<div class="c" style="background:#ffca00">37</div>
<div class="c" style="background:#ffca00">37</div>
<div class="c" style="background:#ffca00">37</div>
<div class="c" style="background:#ffca00">37</div>
<div class="c" style="background:#ffea00">30</div>
<div class="c" style="background:#ffea00">30</div>
<div class="c" style="background:#ffea00">30</div>
</div>
<div class="tr">
<div class="rh">0.48</div>
<div class="c" style="background:#72ff00">12</div>
<div class="c" style="background:#72ff00">12</div>
<div class="c" style="background:#87ff00">14</div>
<div class="c" style="background:#92ff00">15</div>
<div class="c" style="background:#9cff00">16</div>
<div class="c" style="background:#b1ff00">18</div>
<div class="c" style="background:#c6ff00">20</div>
<div class="c" style="background:#dbff00">22</div>
<div class="c" style="background:#efff00">24</div>
<div class="c" style="background:#fff400">28</div>
<div class="c" style="background:#ffef00">29</div>
<div class="c" style="background:#ffe600">31</div>
<div class="c" style="background:#ffdc00">33</div>
<div class="c" style="background:#ffd300">35</div>
<div class="c" style="background:#ffd300">35</div>
<div class="c" style="background:#ffcf00">36</div>
<div class="c" style="background:#ffcf00">36</div>
<div class="c" style="background:#ffcf00">36</div>
<div class="c" style="background:#ffca00">37</div>
<div class="c" style="background:#ffca00">37</div>
<div class="c" style="background:#ffca00">37</div>
<div class="c" style="background:#ffca00">37</div>
<div class="c" style="background:#ffca00">37</div>
<div class="c" style="background:#ffcf00">36</div>
<div class="c" style="background:#ffcf00">36</div>
<div class="c" style="background:#ffd300">35</div>
<div class="c" style="background:#ffd300">35</div>
<div class="c" style="background:#ffd300">35</div>
<div class="c" style="background:#ffd300">35</div>
<div class="c" style="background:#ffd300">35</div>
<div class="c" style="background:#fff400">28</div>
<div class="c" style="background:#fff400">28</div>
<div class="c" style="background:#fff400">28</div>
</div>
<div class="tr">
<div class="rh">0.52</div>
<div class="c" style="background:#49ff00">8</div>
<div class="c" style="background:#49ff00">8</div>
<div class="c" style="background:#5eff00">10</div>
<div class="c" style="background:#68ff00">11</div>
<div class="c" style="background:#72ff00">12</div>
<div class="c" style="background:#92ff00">15</div>
<div class="c" style="background:#b1ff00">18</div>
<div class="c" style="background:#d0ff00">21</div>
<div class="c" style="background:#e5ff00">23</div>
<div class="c" style="background:#fffd00">26</div>
<div class="c" style="background:#fff400">28</div>
<div class="c" style="background:#ffea00">30</div>
<div class="c" style="background:#ffe600">31</div>
<div class="c" style="background:#ffdc00">33</div>
<div class="c" style="background:#ffd800">34</div>
<div class="c" style="background:#ffd300">35</div>
<div class="c" style="background:#ffd300">35</div>
<div class="c" style="background:#ffd300">35</div>
<div class="c" style="background:#ffcf00">36</div>
<div class="c" style="background:#ffcf00">36</div>
<div class="c" style="background:#ffcf00">36</div>
<div class="c" style="background:#ffcf00">36</div>
<div class="c" style="background:#ffcf00">36</div>
<div class="c" style="background:#ffd800">34</div>
<div class="c" style="background:#ffd800">34</div>
<div class="c" style="background:#ffd800">34</div>
<div class="c" style="background:#ffdc00">33</div>
<div class="c" style="background:#ffdc00">33</div>
<div class="c" style="background:#ffdc00">33</div>
<div class="c" style="background:#ffdc00">33</div>
<div class="c" style="background:#fff800">27</div>
<div class="c" style="background:#fff800">27</div>
<div class="c" style="background:#fff800">27</div>
</div>
<div class="tr">
<div class="rh">0.56</div>
<div class="c" style="background:#34ff00">6</div>
<div class="c" style="background:#34ff00">6</div>
<div class="c" style="background:#3eff00">7</div>
<div class="c" style="background:#49ff00">8</div>
<div class="c" style="background:#5eff00">10</div>
<div class="c" style="background:#7dff00">13</div>
<div class="c" style="background:#9cff00">16</div>
<div class="c" style="background:#bbff00">19</div>
<div class="c" style="background:#d0ff00">21</div>
<div class="c" style="background:#efff00">24</div>
<div class="c" style="background:#fff800">27</div>
<div class="c" style="background:#fff400">28</div>
<div class="c" style="background:#ffe600">31</div>
<div class="c" style="background:#ffe100">32</div>
<div class="c" style="background:#ffdc00">33</div>
<div class="c" style="background:#ffd800">34</div>
<div class="c" style="background:#ffd800">34</div>
<div class="c" style="background:#ffd300">35</div>
<div class="c" style="background:#ffd300">35</div>
<div class="c" style="background:#ffd300">35</div>
<div class="c" style="background:#ffd800">34</div>
<div class="c" style="background:#ffd800">34</div>
<div class="c" style="background:#ffd800">34</div>
<div class="c" style="background:#ffdc00">33</div>
<div class="c" style="background:#ffe600">31</div>
<div class="c" style="background:#ffe100">32</div>
<div class="c" style="background:#ffe600">31</div>
<div class="c" style="background:#ffe600">31</div>
<div class="c" style="background:#ffe600">31</div>
<div class="c" style="background:#ffe600">31</div>
<div class="c" style="background:#faff00">25</div>
<div class="c" style="background:#faff00">25</div>
<div class="c" style="background:#faff00">25</div>
</div>
<div class="tr">
<div class="rh">0.60</div>
<div class="c" style="background:#1fff00">4</div>
<div class="c" style="background:#1fff00">4</div>
<div class="c" style="background:#2aff00">5</div>
<div class="c" style="background:#3eff00">7</div>
<div class="c" style="background:#49ff00">8</div>
<div class="c" style="background:#68ff00">11</div>
<div class="c" style="background:#92ff00">15</div>
<div class="c" style="background:#a7ff00">17</div>
<div class="c" style="background:#c6ff00">20</div>
<div class="c" style="background:#e5ff00">23</div>
<div class="c" style="background:#faff00">25</div>
<div class="c" style="background:#fff800">27</div>
<div class="c" style="background:#ffea00">30</div>
<div class="c" style="background:#ffe600">31</div>
<div class="c" style="background:#ffe100">32</div>
<div class="c" style="background:#ffdc00">33</div>
<div class="c" style="background:#ffdc00">33</div>
<div class="c" style="background:#ffd800">34</div>
<div class="c" style="background:#ffd800">34</div>
<div class="c" style="background:#ffd800">34</div>
<div class="c" style="background:#ffdc00">33</div>
<div class="c" style="background:#ffdc00">33</div>
<div class="c" style="background:#ffdc00">33</div>
<div class="c" style="background:#ffe600">31</div>
<div class="c" style="background:#ffea00">30</div>
<div class="c" style="background:#ffea00">30</div>
<div class="c" style="background:#ffef00">29</div>
<div class="c" style="background:#ffef00">29</div>
<div class="c" style="background:#ffef00">29</div>
<div class="c" style="background:#ffef00">29</div>
<div class="c" style="background:#faff00">25</div>
<div class="c" style="background:#faff00">25</div>
<div class="c" style="background:#faff00">25</div>
</div>
<div class="tr">
<div class="rh">0.64</div>
<div class="c" style="background:#15ff00">3</div>
<div class="c" style="background:#15ff00">3</div>
<div class="c" style="background:#15ff00">3</div>
<div class="c" style="background:#2aff00">5</div>
<div class="c" style="background:#3eff00">7</div>
<div class="c" style="background:#68ff00">11</div>
<div class="c" style="background:#7dff00">13</div>
<div class="c" style="background:#9cff00">16</div>
<div class="c" style="background:#bbff00">19</div>
<div class="c" style="background:#d0ff00">21</div>
<div class="c" style="background:#efff00">24</div>
<div class="c" style="background:#fffd00">26</div>
<div class="c" style="background:#fff400">28</div>
<div class="c" style="background:#ffea00">30</div>
<div class="c" style="background:#ffe600">31</div>
<div class="c" style="background:#ffe100">32</div>
<div class="c" style="background:#ffe100">32</div>
<div class="c" style="background:#ffdc00">33</div>
<div class="c" style="background:#ffdc00">33</div>
<div class="c" style="background:#ffe100">32</div>
<div class="c" style="background:#ffe100">32</div>
<div class="c" style="background:#ffe100">32</div>
<div class="c" style="background:#ffe600">31</div>
<div class="c" style="background:#ffef00">29</div>
<div class="c" style="background:#fff400">28</div>
<div class="c" style="background:#fff400">28</div>
<div class="c" style="background:#ffef00">29</div>
<div class="c" style="background:#fff400">28</div>
<div class="c" style="background:#fff400">28</div>
<div class="c" style="background:#fff400">28</div>
<div class="c" style="background:#e5ff00">23</div>
<div class="c" style="background:#e5ff00">23</div>
<div class="c" style="background:#e5ff00">23</div>
</div>
<div class="tr">
<div class="rh">0.68</div>
<div class="c" style="background:#0aff00">2</div>
<div class="c" style="background:#0aff00">2</div>
<div class="c" style="background:#0aff00">2</div>
<div class="c" style="background:#15ff00">3</div>
<div class="c" style="background:#2aff00">5</div>
<div class="c" style="background:#53ff00">9</div>
<div class="c" style="background:#72ff00">12</div>
<div class="c" style="background:#92ff00">15</div>
<div class="c" style="background:#a7ff00">17</div>
<div class="c" style="background:#c6ff00">20</div>
<div class="c" style="background:#dbff00">22</div>
<div class="c" style="background:#efff00">24</div>
<div class="c" style="background:#fff800">27</div>
<div class="c" style="background:#ffef00">29</div>
<div class="c" style="background:#ffea00">30</div>
<div class="c" style="background:#ffe600">31</div>
<div class="c" style="background:#ffe600">31</div>
<div class="c" style="background:#ffe100">32</div>
<div class="c" style="background:#ffe100">32</div>
<div class="c" style="background:#ffe600">31</div>
<div class="c" style="background:#ffe600">31</div>
<div class="c" style="background:#ffea00">30</div>
<div class="c" style="background:#ffef00">29</div>
<div class="c" style="background:#fff800">27</div>
<div class="c" style="background:#fff800">27</div>
<div class="c" style="background:#fff800">27</div>
<div class="c" style="background:#fff400">28</div>
<div class="c" style="background:#fff400">28</div>
<div class="c" style="background:#fff400">28</div>
<div class="c" style="background:#fff400">28</div>
<div class="c" style="background:#e5ff00">23</div>
<div class="c" style="background:#e5ff00">23</div>
<div class="c" style="background:#e5ff00">23</div>
</div>
<div class="tr">
<div class="rh">0.72</div>
<div class="c" style="background:#0aff00">2</div>
<div class="c" style="background:#0aff00">2</div>
<div class="c" style="background:#0aff00">2</div>
<div class="c" style="background:#15ff00">3</div>
<div class="c" style="background:#2aff00">5</div>
<div class="c" style="background:#49ff00">8</div>
<div class="c" style="background:#72ff00">12</div>
<div class="c" style="background:#92ff00">15</div>
<div class="c" style="background:#a7ff00">17</div>
<div class="c" style="background:#bbff00">19</div>
<div class="c" style="background:#d0ff00">21</div>
<div class="c" style="background:#e5ff00">23</div>
<div class="c" style="background:#fffd00">26</div>
<div class="c" style="background:#fff400">28</div>
<div class="c" style="background:#ffef00">29</div>
<div class="c" style="background:#ffea00">30</div>
<div class="c" style="background:#ffea00">30</div>
<div class="c" style="background:#ffea00">30</div>
<div class="c" style="background:#ffe600">31</div>
<div class="c" style="background:#ffea00">30</div>
<div class="c" style="background:#ffea00">30</div>
<div class="c" style="background:#ffef00">29</div>
<div class="c" style="background:#fff400">28</div>
<div class="c" style="background:#fffd00">26</div>
<div class="c" style="background:#fffd00">26</div>
<div class="c" style="background:#fffd00">26</div>
<div class="c" style="background:#fff800">27</div>
<div class="c" style="background:#fff800">27</div>
<div class="c" style="background:#fff800">27</div>
<div class="c" style="background:#fff800">27</div>
<div class="c" style="background:#dbff00">22</div>
<div class="c" style="background:#dbff00">22</div>
<div class="c" style="background:#dbff00">22</div>
</div>
<div class="tr">
<div class="rh">0.76</div>
<div class="c" style="background:#0aff00">2</div>
<div class="c" style="background:#0aff00">2</div>
<div class="c" style="background:#0aff00">2</div>
<div class="c" style="background:#15ff00">3</div>
<div class="c" style="background:#15ff00">3</div>
<div class="c" style="background:#3eff00">7</div>
<div class="c" style="background:#68ff00">11</div>
<div class="c" style="background:#87ff00">14</div>
<div class="c" style="background:#9cff00">16</div>
<div class="c" style="background:#bbff00">19</div>
<div class="c" style="background:#c6ff00">20</div>
<div class="c" style="background:#d0ff00">21</div>
<div class="c" style="background:#faff00">25</div>
<div class="c" style="background:#fffd00">26</div>
<div class="c" style="background:#fff800">27</div>
<div class="c" style="background:#fff400">28</div>
<div class="c" style="background:#ffef00">29</div>
<div class="c" style="background:#ffef00">29</div>
<div class="c" style="background:#ffef00">29</div>
<div class="c" style="background:#ffef00">29</div>
<div class="c" style="background:#ffef00">29</div>
<div class="c" style="background:#fff400">28</div>
<div class="c" style="background:#fffd00">26</div>
<div class="c" style="background:#faff00">25</div>
<div class="c" style="background:#faff00">25</div>
<div class="c" style="background:#faff00">25</div>
<div class="c" style="background:#fffd00">26</div>
<div class="c" style="background:#fffd00">26</div>
<div class="c" style="background:#fffd00">26</div>
<div class="c" style="background:#fffd00">26</div>
<div class="c" style="background:#dbff00">22</div>
<div class="c" style="background:#dbff00">22</div>
<div class="c" style="background:#dbff00">22</div>
</div>
<div class="tr">
<div class="rh">0.80</div>
<div class="c" style="background:#0aff00">2</div>
<div class="c" style="background:#0aff00">2</div>
<div class="c" style="background:#0aff00">2</div>
<div class="c" style="background:#15ff00">3</div>
<div class="c" style="background:#15ff00">3</div>
<div class="c" style="background:#34ff00">6</div>
<div class="c" style="background:#53ff00">9</div>
<div class="c" style="background:#72ff00">12</div>
<div class="c" style="background:#92ff00">15</div>
<div class="c" style="background:#b1ff00">18</div>
<div class="c" style="background:#bbff00">19</div>
<div class="c" style="background:#c6ff00">20</div>
<div class="c" style="background:#e5ff00">23</div>
<div class="c" style="background:#efff00">24</div>
<div class="c" style="background:#faff00">25</div>
<div class="c" style="background:#fffd00">26</div>
<div class="c" style="background:#fff800">27</div>
<div class="c" style="background:#fff400">28</div>
<div class="c" style="background:#fff400">28</div>
<div class="c" style="background:#fff400">28</div>
<div class="c" style="background:#fff800">27</div>
<div class="c" style="background:#fff800">27</div>
<div class="c" style="background:#faff00">25</div>
<div class="c" style="background:#e5ff00">23</div>
<div class="c" style="background:#efff00">24</div>
<div class="c" style="background:#e5ff00">23</div>
<div class="c" style="background:#efff00">24</div>
<div class="c" style="background:#efff00">24</div>
<div class="c" style="background:#efff00">24</div>
<div class="c" style="background:#efff00">24</div>
<div class="c" style="background:#dbff00">22</div>
<div class="c" style="background:#dbff00">22</div>
<div class="c" style="background:#dbff00">22</div>
</div>
<div class="tr">
<div class="rh">0.84</div>
<div class="c" style="background:#0aff00">2</div>
<div class="c" style="background:#0aff00">2</div>
<div class="c" style="background:#0aff00">2</div>
<div class="c" style="background:#0aff00">2</div>
<div class="c" style="background:#0aff00">2</div>
<div class="c" style="background:#2aff00">5</div>
<div class="c" style="background:#3eff00">7</div>
<div class="c" style="background:#68ff00">11</div>
<div class="c" style="background:#87ff00">14</div>
<div class="c" style="background:#a7ff00">17</div>
<div class="c" style="background:#a7ff00">17</div>
<div class="c" style="background:#bbff00">19</div>
<div class="c" style="background:#c6ff00">20</div>
<div class="c" style="background:#dbff00">22</div>
<div class="c" style="background:#e5ff00">23</div>
<div class="c" style="background:#efff00">24</div>
<div class="c" style="background:#faff00">25</div>
<div class="c" style="background:#fffd00">26</div>
<div class="c" style="background:#fffd00">26</div>
<div class="c" style="background:#fff800">27</div>
<div class="c" style="background:#fffd00">26</div>
<div class="c" style="background:#faff00">25</div>
<div class="c" style="background:#e5ff00">23</div>
<div class="c" style="background:#dbff00">22</div>
<div class="c" style="background:#e5ff00">23</div>
<div class="c" style="background:#dbff00">22</div>
<div class="c" style="background:#efff00">24</div>
<div class="c" style="background:#e5ff00">23</div>
<div class="c" style="background:#e5ff00">23</div>
<div class="c" style="background:#e5ff00">23</div>
<div class="c" style="background:#dbff00">22</div>
<div class="c" style="background:#dbff00">22</div>
<div class="c" style="background:#dbff00">22</div>
</div>
<div class="tr">
<div class="rh">0.88</div>
<div class="c" style="background:#00ff00">1</div>
<div class="c" style="background:#00ff00">1</div>
<div class="c" style="background:#00ff00">1</div>
<div class="c" style="background:#00ff00">1</div>
<div class="c" style="background:#0aff00">2</div>
<div class="c" style="background:#2aff00">5</div>
<div class="c" style="background:#3eff00">7</div>
<div class="c" style="background:#68ff00">11</div>
<div class="c" style="background:#87ff00">14</div>
<div class="c" style="background:#9cff00">16</div>
<div class="c" style="background:#a7ff00">17</div>
<div class="c" style="background:#bbff00">19</div>
<div class="c" style="background:#c6ff00">20</div>
<div class="c" style="background:#d0ff00">21</div>
<div class="c" style="background:#dbff00">22</div>
<div class="c" style="background:#e5ff00">23</div>
<div class="c" style="background:#efff00">24</div>
<div class="c" style="background:#efff00">24</div>
<div class="c" style="background:#faff00">25</div>
<div class="c" style="background:#faff00">25</div>
<div class="c" style="background:#faff00">25</div>
<div class="c" style="background:#efff00">24</div>
<div class="c" style="background:#e5ff00">23</div>
<div class="c" style="background:#d0ff00">21</div>
<div class="c" style="background:#dbff00">22</div>
<div class="c" style="background:#d0ff00">21</div>
<div class="c" style="background:#dbff00">22</div>
<div class="c" style="background:#dbff00">22</div>
<div class="c" style="background:#dbff00">22</div>
<div class="c" style="background:#dbff00">22</div>
<div class="c" style="background:#dbff00">22</div>
<div class="c" style="background:#dbff00">22</div>
<div class="c" style="background:#dbff00">22</div>
</div>
<div class="tr">
<div class="rh">0.92</div>
<div class="c" style="background:#00ff00">1</div>
<div class="c" style="background:#00ff00">1</div>
<div class="c" style="background:#00ff00">1</div>
<div class="c" style="background:#00ff00">1</div>
<div class="c" style="background:#0aff00">2</div>
<div class="c" style="background:#2aff00">5</div>
<div class="c" style="background:#3eff00">7</div>
<div class="c" style="background:#68ff00">11</div>
<div class="c" style="background:#87ff00">14</div>
<div class="c" style="background:#9cff00">16</div>
<div class="c" style="background:#a7ff00">17</div>
<div class="c" style="background:#b1ff00">18</div>
<div class="c" style="background:#c6ff00">20</div>
<div class="c" style="background:#d0ff00">21</div>
<div class="c" style="background:#dbff00">22</div>
<div class="c" style="background:#e5ff00">23</div>
<div class="c" style="background:#efff00">24</div>
<div class="c" style="background:#efff00">24</div>
<div class="c" style="background:#efff00">24</div>
<div class="c" style="background:#efff00">24</div>
<div class="c" style="background:#efff00">24</div>
<div class="c" style="background:#e5ff00">23</div>
<div class="c" style="background:#dbff00">22</div>
<div class="c" style="background:#c6ff00">20</div>
<div class="c" style="background:#c6ff00">20</div>
<div class="c" style="background:#c6ff00">20</div>
<div class="c" style="background:#d0ff00">21</div>
<div class="c" style="background:#d0ff00">21</div>
<div class="c" style="background:#d0ff00">21</div>
<div class="c" style="background:#d0ff00">21</div>
<div class="c" style="background:#d0ff00">21</div>
<div class="c" style="background:#d0ff00">21</div>
<div class="c" style="background:#d0ff00">21</div>
</div>
<div class="tr">
<div class="rh">0.96</div>
<div class="c" style="background:#00ff00">1</div>
<div class="c" style="background:#00ff00">1</div>
<div class="c" style="background:#00ff00">1</div>
<div class="c" style="background:#00ff00">1</div>
<div class="c" style="background:#0aff00">2</div>
<div class="c" style="background:#2aff00">5</div>
<div class="c" style="background:#3eff00">7</div>
<div class="c" style="background:#68ff00">11</div>
<div class="c" style="background:#87ff00">14</div>
<div class="c" style="background:#92ff00">15</div>
<div class="c" style="background:#a7ff00">17</div>
<div class="c" style="background:#b1ff00">18</div>
<div class="c" style="background:#c6ff00">20</div>
<div class="c" style="background:#d0ff00">21</div>
<div class="c" style="background:#dbff00">22</div>
<div class="c" style="background:#e5ff00">23</div>
<div class="c" style="background:#efff00">24</div>
<div class="c" style="background:#efff00">24</div>
<div class="c" style="background:#efff00">24</div>
<div class="c" style="background:#e5ff00">23</div>
<div class="c" style="background:#efff00">24</div>
<div class="c" style="background:#e5ff00">23</div>
<div class="c" style="background:#d0ff00">21</div>
<div class="c" style="background:#bbff00">19</div>
<div class="c" style="background:#bbff00">19</div>
<div class="c" style="background:#c6ff00">20</div>
<div class="c" style="background:#c6ff00">20</div>
<div class="c" style="background:#c6ff00">20</div>
<div class="c" style="background:#c6ff00">20</div>
<div class="c" style="background:#c6ff00">20</div>
<div class="c" style="background:#d0ff00">21</div>
<div class="c" style="background:#d0ff00">21</div>
<div class="c" style="background:#d0ff00">21</div>
</div>
<div class="tr">
<div class="rh">1.00</div>
<div class="c" style="background:#00ff00">1</div>
<div class="c" style="background:#00ff00">1</div>
<div class="c" style="background:#00ff00">1</div>
<div class="c" style="background:#00ff00">1</div>
<div class="c" style="background:#0aff00">2</div>
<div class="c" style="background:#2aff00">5</div>
<div class="c" style="background:#3eff00">7</div>
<div class="c" style="background:#68ff00">11</div>
<div class="c" style="background:#87ff00">14</div>
<div class="c" style="background:#92ff00">15</div>
<div class="c" style="background:#a7ff00">17</div>
<div class="c" style="background:#b1ff00">18</div>
<div class="c" style="background:#c6ff00">20</div>
<div class="c" style="background:#d0ff00">21</div>
<div class="c" style="background:#dbff00">22</div>
<div class="c" style="background:#e5ff00">23</div>
<div class="c" style="background:#efff00">24</div>
<div class="c" style="background:#efff00">24</div>
<div class="c" style="background:#efff00">24</div>
<div class="c" style="background:#e5ff00">23</div>
<div class="c" style="background:#efff00">24</div>
<div class="c" style="background:#e5ff00">23</div>
<div class="c" style="background:#d0ff00">21</div>
<div class="c" style="background:#b1ff00">18</div>
<div class="c" style="background:#b1ff00">18</div>
<div class="c" style="background:#bbff00">19</div>
<div class="c" style="background:#c6ff00">20</div>
<div class="c" style="background:#c6ff00">20</div>
<div class="c" style="background:#c6ff00">20</div>
<div class="c" style="background:#c6ff00">20</div>
<div class="c" style="background:#d0ff00">21</div>
<div class="c" style="background:#d0ff00">21</div>
<div class="c" style="background:#d0ff00">21</div>
</div>
<div class="tr">
<div class="rh">1.04</div>
<div class="c" style="background:#00ff00">1</div>
<div class="c" style="background:#00ff00">1</div>
<div class="c" style="background:#00ff00">1</div>
<div class="c" style="background:#00ff00">1</div>
<div class="c" style="background:#00ff00">1</div>
<div class="c" style="background:#2aff00">5</div>
<div class="c" style="background:#3eff00">7</div>
<div class="c" style="background:#68ff00">11</div>
<div class="c" style="background:#87ff00">14</div>
<div class="c" style="background:#92ff00">15</div>
<div class="c" style="background:#a7ff00">17</div>
<div class="c" style="background:#b1ff00">18</div>
<div class="c" style="background:#c6ff00">20</div>
<div class="c" style="background:#d0ff00">21</div>
<div class="c" style="background:#dbff00">22</div>
<div class="c" style="background:#e5ff00">23</div>
<div class="c" style="background:#efff00">24</div>
<div class="c" style="background:#efff00">24</div>
<div class="c" style="background:#efff00">24</div>
<div class="c" style="background:#e5ff00">23</div>
<div class="c" style="background:#e5ff00">23</div>
<div class="c" style="background:#dbff00">22</div>
<div class="c" style="background:#c6ff00">20</div>
<div class="c" style="background:#b1ff00">18</div>
<div class="c" style="background:#b1ff00">18</div>
<div class="c" style="background:#bbff00">19</div>
<div class="c" style="background:#c6ff00">20</div>
<div class="c" style="background:#c6ff00">20</div>
<div class="c" style="background:#c6ff00">20</div>
<div class="c" style="background:#c6ff00">20</div>
<div class="c" style="background:#b1ff00">18</div>
<div class="c" style="background:#b1ff00">18</div>
<div class="c" style="background:#b1ff00">18</div>
</div>
<div class="tr">
<div class="rh">1.08</div>
<div class="c" style="background:#00ff00">1</div>
<div class="c" style="background:#00ff00">1</div>
<div class="c" style="background:#00ff00">1</div>
<div class="c" style="background:#00ff00">1</div>
<div class="c" style="background:#00ff00">1</div>
<div class="c" style="background:#2aff00">5</div>
<div class="c" style="background:#3eff00">7</div>
<div class="c" style="background:#68ff00">11</div>
<div class="c" style="background:#87ff00">14</div>
<div class="c" style="background:#92ff00">15</div>
<div class="c" style="background:#a7ff00">17</div>
<div class="c" style="background:#b1ff00">18</div>
<div class="c" style="background:#c6ff00">20</div>
<div class="c" style="background:#d0ff00">21</div>
<div class="c" style="background:#dbff00">22</div>
<div class="c" style="background:#e5ff00">23</div>
<div class="c" style="background:#efff00">24</div>
<div class="c" style="background:#efff00">24</div>
<div class="c" style="background:#efff00">24</div>
<div class="c" style="background:#e5ff00">23</div>
<div class="c" style="background:#efff00">24</div>
<div class="c" style="background:#dbff00">22</div>
<div class="c" style="background:#c6ff00">20</div>
<div class="c" style="background:#bbff00">19</div>
<div class="c" style="background:#b1ff00">18</div>
<div class="c" style="background:#bbff00">19</div>
<div class="c" style="background:#c6ff00">20</div>
<div class="c" style="background:#c6ff00">20</div>
<div class="c" style="background:#c6ff00">20</div>
<div class="c" style="background:#c6ff00">20</div>
<div class="c" style="background:#9cff00">16</div>
<div class="c" style="background:#9cff00">16</div>
<div class="c" style="background:#9cff00">16</div>
</div>
<div class="tr">
<div class="rh">1.12</div>
<div class="c" style="background:#00ff00">1</div>
<div class="c" style="background:#00ff00">1</div>
<div class="c" style="background:#00ff00">1</div>
<div class="c" style="background:#00ff00">1</div>
<div class="c" style="background:#00ff00">1</div>
<div class="c" style="background:#2aff00">5</div>
<div class="c" style="background:#3eff00">7</div>
<div class="c" style="background:#68ff00">11</div>
<div class="c" style="background:#87ff00">14</div>
<div class="c" style="background:#92ff00">15</div>
<div class="c" style="background:#a7ff00">17</div>
<div class="c" style="background:#b1ff00">18</div>
<div class="c" style="background:#c6ff00">20</div>
<div class="c" style="background:#d0ff00">21</div>
<div class="c" style="background:#dbff00">22</div>
<div class="c" style="background:#e5ff00">23</div>
<div class="c" style="background:#efff00">24</div>
<div class="c" style="background:#efff00">24</div>
<div class="c" style="background:#e5ff00">23</div>
<div class="c" style="background:#e5ff00">23</div>
<div class="c" style="background:#efff00">24</div>
<div class="c" style="background:#dbff00">22</div>
<div class="c" style="background:#c6ff00">20</div>
<div class="c" style="background:#b1ff00">18</div>
<div class="c" style="background:#b1ff00">18</div>
<div class="c" style="background:#bbff00">19</div>
<div class="c" style="background:#c6ff00">20</div>
<div class="c" style="background:#c6ff00">20</div>
<div class="c" style="background:#c6ff00">20</div>
<div class="c" style="background:#c6ff00">20</div>
<div class="c" style="background:#9cff00">16</div>
<div class="c" style="background:#9cff00">16</div>
<div class="c" style="background:#9cff00">16</div>
</div>
<div class="tr">
<div class="rh">1.16</div>
<div class="c" style="background:#00ff00">1</div>
<div class="c" style="background:#00ff00">1</div>
<div class="c" style="background:#00ff00">1</div>
<div class="c" style="background:#00ff00">1</div>
<div class="c" style="background:#00ff00">1</div>
<div class="c" style="background:#2aff00">5</div>
<div class="c" style="background:#3eff00">7</div>
<div class="c" style="background:#68ff00">11</div>
<div class="c" style="background:#87ff00">14</div>
<div class="c" style="background:#92ff00">15</div>
<div class="c" style="background:#a7ff00">17</div>
<div class="c" style="background:#b1ff00">18</div>
<div class="c" style="background:#c6ff00">20</div>
<div class="c" style="background:#d0ff00">21</div>
<div class="c" style="background:#dbff00">22</div>
<div class="c" style="background:#e5ff00">23</div>
<div class="c" style="background:#efff00">24</div>
<div class="c" style="background:#efff00">24</div>
<div class="c" style="background:#e5ff00">23</div>
<div class="c" style="background:#e5ff00">23</div>
<div class="c" style="background:#efff00">24</div>
<div class="c" style="background:#dbff00">22</div>
<div class="c" style="background:#c6ff00">20</div>
<div class="c" style="background:#bbff00">19</div>
<div class="c" style="background:#bbff00">19</div>
<div class="c" style="background:#bbff00">19</div>
<div class="c" style="background:#c6ff00">20</div>
<div class="c" style="background:#c6ff00">20</div>
<div class="c" style="background:#c6ff00">20</div>
<div class="c" style="background:#c6ff00">20</div>
<div class="c" style="background:#9cff00">16</div>
<div class="c" style="background:#9cff00">16</div>
<div class="c" style="background:#9cff00">16</div>
</div>
<div class="tr">
<div class="rh">1.20</div>
<div class="c" style="background:#00ff00">1</div>
<div class="c" style="background:#00ff00">1</div>
<div class="c" style="background:#00ff00">1</div>
<div class="c" style="background:#00ff00">1</div>
<div class="c" style="background:#00ff00">1</div>
<div class="c" style="background:#2aff00">5</div>
<div class="c" style="background:#3eff00">7</div>
<div class="c" style="background:#68ff00">11</div>
<div class="c" style="background:#87ff00">14</div>
<div class="c" style="background:#92ff00">15</div>
<div class="c" style="background:#a7ff00">17</div>
<div class="c" style="background:#b1ff00">18</div>
<div class="c" style="background:#c6ff00">20</div>
<div class="c" style="background:#d0ff00">21</div>
<div class="c" style="background:#dbff00">22</div>
<div class="c" style="background:#e5ff00">23</div>
<div class="c" style="background:#efff00">24</div>
<div class="c" style="background:#efff00">24</div>
<div class="c" style="background:#efff00">24</div>
<div class="c" style="background:#e5ff00">23</div>
<div class="c" style="background:#efff00">24</div>
<div class="c" style="background:#dbff00">22</div>
<div class="c" style="background:#c6ff00">20</div>
<div class="c" style="background:#bbff00">19</div>
<div class="c" style="background:#b1ff00">18</div>
<div class="c" style="background:#bbff00">19</div>
<div class="c" style="background:#c6ff00">20</div>
<div class="c" style="background:#c6ff00">20</div>
<div class="c" style="background:#c6ff00">20</div>
<div class="c" style="background:#c6ff00">20</div>
<div class="c" style="background:#9cff00">16</div>
<div class="c" style="background:#9cff00">16</div>
<div class="c" style="background:#9cff00">16</div>
</div>
<div class="tr">
<div class="rh">1.24</div>
<div class="c" style="background:#00ff00">1</div>
<div class="c" style="background:#00ff00">1</div>
<div class="c" style="background:#00ff00">1</div>
<div class="c" style="background:#00ff00">1</div>
<div class="c" style="background:#00ff00">1</div>
<div class="c" style="background:#2aff00">5</div>
<div class="c" style="background:#3eff00">7</div>
<div class="c" style="background:#68ff00">11</div>
<div class="c" style="background:#87ff00">14</div>
<div class="c" style="background:#92ff00">15</div>
<div class="c" style="background:#a7ff00">17</div>
<div class="c" style="background:#b1ff00">18</div>
<div class="c" style="background:#c6ff00">20</div>
<div class="c" style="background:#d0ff00">21</div>
<div class="c" style="background:#dbff00">22</div>
<div class="c" style="background:#e5ff00">23</div>
<div class="c" style="background:#efff00">24</div>
<div class="c" style="background:#efff00">24</div>
<div class="c" style="background:#efff00">24</div>
<div class="c" style="background:#e5ff00">23</div>
<div class="c" style="background:#efff00">24</div>
<div class="c" style="background:#dbff00">22</div>
<div class="c" style="background:#c6ff00">20</div>
<div class="c" style="background:#bbff00">19</div>
<div class="c" style="background:#b1ff00">18</div>
<div class="c" style="background:#bbff00">19</div>
<div class="c" style="background:#c6ff00">20</div>
<div class="c" style="background:#c6ff00">20</div>
<div class="c" style="background:#c6ff00">20</div>
<div class="c" style="background:#c6ff00">20</div>
<div class="c" style="background:#9cff00">16</div>
<div class="c" style="background:#9cff00">16</div>
<div class="c" style="background:#9cff00">16</div>
</div>
<div class="tr">
<div class="rh">1.28</div>
<div class="c" style="background:#00ff00">1</div>
<div class="c" style="background:#00ff00">1</div>
<div class="c" style="background:#00ff00">1</div>
<div class="c" style="background:#00ff00">1</div>
<div class="c" style="background:#00ff00">1</div>
<div class="c" style="background:#2aff00">5</div>
<div class="c" style="background:#3eff00">7</div>
<div class="c" style="background:#68ff00">11</div>
<div class="c" style="background:#87ff00">14</div>
<div class="c" style="background:#92ff00">15</div>
<div class="c" style="background:#a7ff00">17</div>
<div class="c" style="background:#b1ff00">18</div>
<div class="c" style="background:#c6ff00">20</div>
<div class="c" style="background:#d0ff00">21</div>
<div class="c" style="background:#dbff00">22</div>
<div class="c" style="background:#e5ff00">23</div>
<div class="c" style="background:#efff00">24</div>
<div class="c" style="background:#efff00">24</div>
<div class="c" style="background:#e5ff00">23</div>
<div class="c" style="background:#e5ff00">23</div>
<div class="c" style="background:#efff00">24</div>
<div class="c" style="background:#dbff00">22</div>
<div class="c" style="background:#c6ff00">20</div>
<div class="c" style="background:#b1ff00">18</div>
<div class="c" style="background:#b1ff00">18</div>
<div class="c" style="background:#bbff00">19</div>
<div class="c" style="background:#c6ff00">20</div>
<div class="c" style="background:#c6ff00">20</div>
<div class="c" style="background:#c6ff00">20</div>
<div class="c" style="background:#c6ff00">20</div>
<div class="c" style="background:#9cff00">16</div>
<div class="c" style="background:#9cff00">16</div>
<div class="c" style="background:#9cff00">16</div>
</div>
<div class="tr">
<div class="rh">1.32</div>
<div class="c" style="background:#00ff00">1</div>
<div class="c" style="background:#00ff00">1</div>
<div class="c" style="background:#00ff00">1</div>
<div class="c" style="background:#00ff00">1</div>
<div class="c" style="background:#00ff00">1</div>
<div class="c" style="background:#2aff00">5</div>
<div class="c" style="background:#3eff00">7</div>
<div class="c" style="background:#68ff00">11</div>
<div class="c" style="background:#87ff00">14</div>
<div class="c" style="background:#92ff00">15</div>
<div class="c" style="background:#a7ff00">17</div>
<div class="c" style="background:#b1ff00">18</div>
<div class="c" style="background:#c6ff00">20</div>
<div class="c" style="background:#d0ff00">21</div>
<div class="c" style="background:#dbff00">22</div>
<div class="c" style="background:#e5ff00">23</div>
<div class="c" style="background:#efff00">24</div>
<div class="c" style="background:#efff00">24</div>
<div class="c" style="background:#e5ff00">23</div>
<div class="c" style="background:#e5ff00">23</div>
<div class="c" style="background:#efff00">24</div>
<div class="c" style="background:#dbff00">22</div>
<div class="c" style="background:#c6ff00">20</div>
<div class="c" style="background:#bbff00">19</div>
<div class="c" style="background:#bbff00">19</div>
<div class="c" style="background:#bbff00">19</div>
<div class="c" style="background:#c6ff00">20</div>
<div class="c" style="background:#c6ff00">20</div>
<div class="c" style="background:#c6ff00">20</div>
<div class="c" style="background:#c6ff00">20</div>
<div class="c" style="background:#9cff00">16</div>
<div class="c" style="background:#9cff00">16</div>
<div class="c" style="background:#9cff00">16</div>
</div>
<div class="tr">
<div class="rh">1.36</div>
<div class="c" style="background:#00ff00">1</div>
<div class="c" style="background:#00ff00">1</div>
<div class="c" style="background:#00ff00">1</div>
<div class="c" style="background:#00ff00">1</div>
<div class="c" style="background:#00ff00">1</div>
<div class="c" style="background:#2aff00">5</div>
<div class="c" style="background:#3eff00">7</div>
<div class="c" style="background:#68ff00">11</div>
<div class="c" style="background:#87ff00">14</div>
<div class="c" style="background:#92ff00">15</div>
<div class="c" style="background:#a7ff00">17</div>
<div class="c" style="background:#b1ff00">18</div>
<div class="c" style="background:#c6ff00">20</div>
<div class="c" style="background:#d0ff00">21</div>
<div class="c" style="background:#dbff00">22</div>
<div class="c" style="background:#e5ff00">23</div>
<div class="c" style="background:#efff00">24</div>
<div class="c" style="background:#efff00">24</div>
<div class="c" style="background:#efff00">24</div>
<div class="c" style="background:#e5ff00">23</div>
<div class="c" style="background:#efff00">24</div>
<div class="c" style="background:#dbff00">22</div>
<div class="c" style="background:#c6ff00">20</div>
<div class="c" style="background:#bbff00">19</div>
<div class="c" style="background:#b1ff00">18</div>
<div class="c" style="background:#bbff00">19</div>
<div class="c" style="background:#c6ff00">20</div>
<div class="c" style="background:#c6ff00">20</div>
<div class="c" style="background:#c6ff00">20</div>
<div class="c" style="background:#c6ff00">20</div>
<div class="c" style="background:#9cff00">16</div>
<div class="c" style="background:#9cff00">16</div>
<div class="c" style="background:#9cff00">16</div>
</div>
</div>
</div>
</div>
<div id="taskbar"><div class="abs" style="left:0;top:0;width:72px;height:60px;background:#1f1f1f"></div>
<div class="abs" style="left:72px;top:0;width:516px;height:60px;background:#f2f2f2"></div>
<div class="abs" style="left:1040px;top:0;width:73px;height:60px;background:linear-gradient(#4d4b4a,#403e3d)"></div>
<div class="abs" style="left:896px;top:57px;width:61px;height:3px;background:#76b9ed"></div>
<div class="abs" style="left:1040px;top:57px;width:73px;height:3px;background:#76b9ed"></div>
<div class="abs" style="left:132.500px;top:17px;font-size:21px;line-height:28px;letter-spacing:-.3px;color:#2b2b2b;white-space:pre">Type here to search</div>
<svg class="abs" style="left:0;top:0" width="1920" height="60" viewBox="0 1020 1920 60">
<defs>
<linearGradient id="gitr" x1="0" y1="0" x2="1" y2="1"><stop offset="0" stop-color="#ff5e7e"/><stop offset=".5" stop-color="#c850d8"/><stop offset="1" stop-color="#2fb8f6"/></linearGradient>
<linearGradient id="gitn" x1="0" y1="0" x2="0" y2="1"><stop offset="0" stop-color="#fb5c74"/><stop offset=".55" stop-color="#c45ce0"/><stop offset="1" stop-color="#3f9df8"/></linearGradient>
</defs>
<!-- start -->
<path d="M24 1040.800l10-1.400v9.800H24zM35.200 1039.200l12.800-1.800v11.800H35.200zM24 1050.400h10v9.800l-10-1.400zM35.200 1050.400H48v11.800l-12.800-1.800z" fill="#fff"/>
<!-- cortana -->
<circle cx="102" cy="1051" r="14.500" fill="none" stroke="#8a8a8a" stroke-width="4.500"/>
<circle cx="102" cy="1051" r="14.200" fill="none" stroke="#000" stroke-width="3.200"/>
<!-- mic -->
<g fill="none" stroke="#222" stroke-width="1.500"><rect x="553.500" y="1038.500" width="7" height="15" rx="3.500"/><path d="M550.500 1049.500v2.500a6.500 6.500 0 0 0 13 0v-2.500M557 1058.500v3.500M552.500 1062h9"/></g>
<!-- task view -->
<g fill="none" stroke="#fff" stroke-width="1.200"><rect x="612.500" y="1044.500" width="15.500" height="10.500"/><path d="M612.500 1041.500v-3.500h15.500v3.500M612.500 1058v3.500h15.500v-3.500M634.500 1038v23.500"/></g>
<rect x="633" y="1045" width="3" height="3" fill="#fff"/>
<!-- explorer -->
<path d="M685 1039q0-2 2-2h9l3 2.500h16q2 0 2 2V1061q0 1.500-1.500 1.500H686.500q-1.500 0-1.500-1.500z" fill="#fce49a"/>
<path d="M685 1039q0-2 2-2h9l3 2.500H685z" fill="#f3c345"/>
<rect x="687.500" y="1038.200" width="6.500" height="1.300" fill="#fff"/>
<path d="M690.500 1052q0-2 2-2H709q2 0 2 2v11h-5v-8h-10.500v8h-5z" fill="#3cb0ea"/>
<!-- store -->
<path d="M769.500 1041.500v-3a7.500 7.500 0 0 1 15 0v3M772.500 1041.500v-2.500a6 6 0 0 1 12 0" fill="none" stroke="#fff" stroke-width="1.400"/>
<path d="M758 1041h35v23q0 2-2 2H760q-2 0-2-2z" fill="#fff"/>
<rect x="768.400" y="1046.300" width="6.400" height="6.200" fill="#f25022"/><rect x="776" y="1046.300" width="6.400" height="6.200" fill="#7fba00"/><rect x="768.400" y="1053.700" width="6.400" height="6.200" fill="#00a4ef"/><rect x="776" y="1053.700" width="6.400" height="6.200" fill="#ffb900"/>
<!-- L -->
<rect x="833" y="1032" width="36" height="36" fill="#29a7d9"/>
<path d="M845.500 1040l-5 21.500 10.500-2.500z" fill="#0b2d72"/>
<path d="M845.500 1037.200h5.800v16.400h9v5.400h-14.800z" fill="#fff"/>
<!-- chrome -->
<circle cx="925.800" cy="1049.700" r="16.700" fill="#dd4b3e"/>
<path d="M925.800 1049.700l-14.460-8.350A16.700 16.700 0 0 0 925.800 1066.400l7.200-12.500z" fill="#1ba260"/>
<path d="M925.800 1049.700l7.200 4.200-7.200 12.500a16.700 16.700 0 0 0 14.460-25.050H925.800z" fill="#ffce42"/>
<path d="M925.800 1041.350h14.460a16.700 16.700 0 0 0-28.920 0l7.230 12.500z" fill="#dd4b3e"/>
<circle cx="925.800" cy="1049.700" r="7.800" fill="#fff"/><circle cx="925.800" cy="1049.700" r="6.200" fill="#4c8bf5"/>
<!-- itunes -->
<circle cx="1001" cy="1050" r="15.800" fill="#fafafa" stroke="url(#gitr)" stroke-width="2.200"/>
<path d="M996.500 1043l11-2.300v13.300a3.300 2.800 0 1 1-2-2.600v-7.300l-7 1.500v10.400a3.300 2.800 0 1 1-2-2.600z" fill="url(#gitn)"/>
<!-- wrench -->
<path d="M1062 1060.800L1077.500 1046" stroke="#cdcdcf" stroke-width="5.400" stroke-linecap="round" fill="none"/>
<circle cx="1083" cy="1041.800" r="5.200" fill="none" stroke="#d6d6d8" stroke-width="4.600"/>
<path d="M1084.200 1040.600L1093 1031.800" stroke="#474544" stroke-width="4.800" fill="none"/>
<circle cx="1062.600" cy="1060.200" r="1.100" fill="#5a5a5a"/>
<!-- battery widget -->
<rect x="1255" y="1035" width="74" height="30.200" fill="#fff"/><rect x="1329" y="1042.700" width="3.400" height="14.500" fill="#fff"/>
<rect x="1258.600" y="1038.200" width="67.600" height="23.800" fill="#13a24d"/>
<text x="1269" y="1058.600" font-family="Liberation Sans" font-size="20.300" fill="#fff" textLength="49" lengthAdjust="spacingAndGlyphs">100%</text>
<!-- plug -->
<path d="M1343.500 1039h2.600v7h3.300v-7h2.600v7h2.200v5q0 4.500-4.500 5.500v5.500h-3.400v-5.500q-4.500-1-4.500-5.500v-5h1.700z" fill="#fff"/>
<!-- people -->
<g fill="none" stroke="#fff" stroke-width="1.400"><circle cx="1405" cy="1042" r="3.600"/><path d="M1399.500 1049.500q5.500-5 11 2"/><circle cx="1395.500" cy="1051.500" r="3.400"/><path d="M1389.500 1061q1-6.500 6-6.500t6 6.500"/></g>
<!-- chevron -->
<path d="M1451 1054l9-9 9 9" fill="none" stroke="#fff" stroke-width="1.300"/>
<!-- onedrive -->
<path d="M1500 1058q-4 0-4-3.800 0-3.400 3.600-3.900.6-4.300 5-4.800 3.300-.3 5 2.500 2.500-1 4.500.5 1.800 1.400 1.600 3.700 4.300.4 4.300 3.200 0 2.600-3.500 2.600z" fill="#e6e6e6"/>
<path d="M1500 1058q-4 0-4-3.800 0-3.400 3.600-3.900l14 7.700z" fill="#fff"/><path d="M1504.600 1045.500q3.300-.3 5 2.500l-5.500 3.500-4.500-1.200q.6-4.300 5-4.800z" fill="#9a9a9a"/>
<!-- battery small -->
<g fill="none" stroke="#fff" stroke-width="1.300"><rect x="1548.500" y="1044.500" width="17.500" height="11.500"/><path d="M1567.300 1048v4.500M1546 1041v3.500M1550 1041v3.500M1544.500 1044.700h7v3q0 2.300-3.500 2.300t-3.500-2.300zM1548 1050v6"/></g>
<!-- wifi -->
<g fill="none" stroke="#fff" stroke-width="1.300"><path d="M1596 1058.500a16.500 16.500 0 0 1 16.500-16.500M1601 1058.500a11.500 11.500 0 0 1 11.500-11.500M1606 1058.500a6.500 6.500 0 0 1 6.500-6.500"/></g><circle cx="1612.500" cy="1058.300" r="1.700" fill="#fff"/>
<!-- volume -->
<g fill="none" stroke="#fff" stroke-width="1.300"><path d="M1641.500 1046.500h3.500l5-5v17l-5-5h-3.500zM1653.500 1046.500q1.800 3.500 0 7M1656.500 1044q3.200 6 0 12"/><path d="M1659.800 1041.500q4.500 8.500 0 17" stroke="#8a8a8a"/></g>
<!-- pen -->
<g fill="none" stroke="#fff" stroke-width="1.300"><path d="M1701.500 1058.500l1.500-5 7.500-12.500q1.200-1.200 2.700-.3t.8 2.500l-7.500 12.500z"/><path d="M1702 1051.500q-5 .5-5.500 4t3.500 3.800M1709 1049q7-.5 7-3.500t-4-3"/></g>
<!-- clock -->
<text x="1787.500" y="1042.700" font-family="Liberation Sans" font-size="17.600" fill="#fff" text-anchor="middle" textLength="64" lengthAdjust="spacingAndGlyphs">6:40 PM</text>
<text x="1788.700" y="1070.700" font-family="Liberation Sans" font-size="17.800" fill="#fff" text-anchor="middle" textLength="91" lengthAdjust="spacingAndGlyphs">10/21/2019</text>
<!-- notif -->
<path d="M1858.500 1038.500h23v18.500h-8l-4 4-4-4h-7z" fill="none" stroke="#fff" stroke-width="1.300"/>
<path d="M1913.500 1020v60" stroke="#8a8a8a" stroke-width="1"/>
</svg>
</div>
</body></html>
